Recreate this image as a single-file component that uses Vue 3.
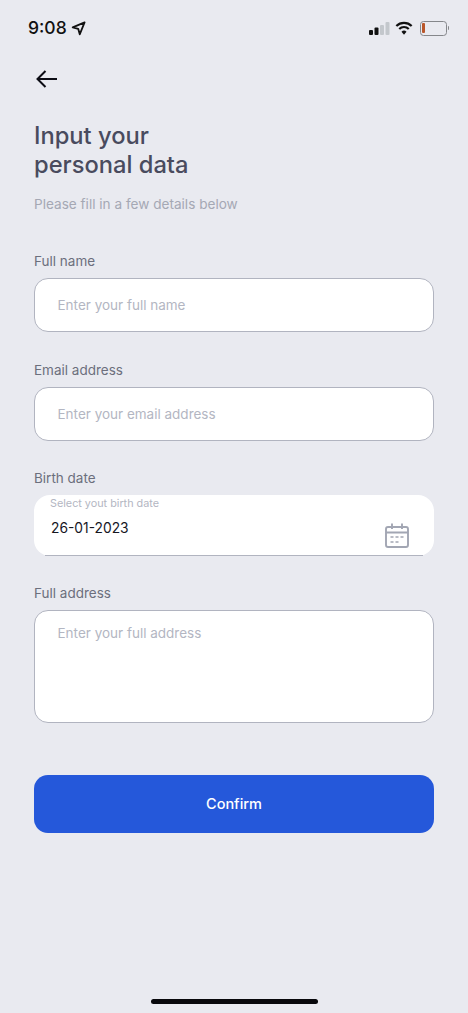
<script setup>
const fields = [
  { label: 'Full name', placeholder: 'Enter your full name' },
  { label: 'Email address', placeholder: 'Enter your email address' }
]
</script>

<template>
  <div class="screen">
    <header class="status">
      <div class="time">
        <span>9:08</span>
        <svg class="loc" viewBox="0 0 16 16" width="15" height="15"><path d="M14.5 1.5 1.8 6.8l5.9 1.5 1.6 5.9z" fill="none" stroke="#111" stroke-width="1.9" stroke-linejoin="round"/></svg>
      </div>
      <div class="sys">
        <svg class="signal" width="21" height="13" viewBox="0 0 21 13">
          <rect x="0" y="8" width="4" height="5" rx="1" fill="#111"/>
          <rect x="5.5" y="5.5" width="4" height="7.5" rx="1" fill="#111"/>
          <rect x="11" y="3" width="4" height="10" rx="1" fill="#c3c7cc"/>
          <rect x="16.5" y="0" width="4" height="13" rx="1" fill="#c3c7cc"/>
        </svg>
        <svg class="wifi" width="18" height="14" viewBox="0 0 19 15">
          <path d="M1.3 5.4a11.6 11.6 0 0 1 16.4 0" fill="none" stroke="#111" stroke-width="2.3"/>
          <path d="M4.4 8.6a7.2 7.2 0 0 1 10.2 0" fill="none" stroke="#111" stroke-width="2.3"/>
          <path d="M9.5 14.6 6.8 11.5a3.9 3.9 0 0 1 5.4 0z" fill="#111"/>
        </svg>
        <div class="battery"><div class="cell"><i></i></div><b></b></div>
      </div>
    </header>

    <main class="content">
      <button class="back" aria-label="Back">
        <svg width="24" height="20" viewBox="0 0 24 20"><path d="M22 10H3M10.5 2 2.5 10l8 8" fill="none" stroke="#0c0c14" stroke-width="2"/></svg>
      </button>

      <h1>Input your<br>personal data</h1>
      <p class="sub">Please fill in a few details below</p>

      <div v-for="f in fields" :key="f.label" class="field">
        <label>{{ f.label }}</label>
        <div class="input">{{ f.placeholder }}</div>
      </div>

      <div class="field date-field">
        <label>Birth date</label>
        <div class="date">
          <span class="hint">Select yout birth date</span>
          <span class="value">26-01-2023</span>
          <svg class="cal" width="26" height="26" viewBox="0 0 26 26" fill="none" stroke="#a2a6b3" stroke-width="1.9">
            <rect x="2" y="5" width="22" height="20" rx="2"/>
            <path d="M2 10.5h22M8 1.5V7M18 1.5V7"/>
            <path d="M6.5 15h3M11.5 15h3M16.5 15h3M6.5 20h3M11.5 20h3" stroke-width="1.5"/>
          </svg>
          <div class="underline"></div>
        </div>
      </div>

      <div class="field addr">
        <label>Full address</label>
        <div class="input area">Enter your full address</div>
      </div>

      <button class="confirm">Confirm</button>
    </main>

    <div class="home"></div>
  </div>
</template>

<style>
html, body { margin: 0; background: #e9eaf0; }
</style>

<style scoped>
.screen {
  width: 468px;
  height: 1013px;
  background: #e9eaf0;
  position: relative;
  overflow: hidden;
  font-family: Inter, "Liberation Sans", sans-serif;
  display: flex;
  flex-direction: column;
}
.status {
  height: 56px;
  box-sizing: border-box;
  padding: 17px 19px 0 28px;
  display: flex;
  justify-content: space-between;
  align-items: flex-start;
}
.time {
  display: flex;
  align-items: center;
  gap: 4px;
  font-size: 17.5px;
  font-weight: 500;
  line-height: 22px;
  color: #111;
}
.loc { margin-top: 1px; }
.sys {
  display: flex;
  align-items: center;
  gap: 5px;
  height: 22px;
}
.wifi { margin-right: 1.5px; }
.battery { display: flex; align-items: center; gap: 1px; }
.cell {
  width: 22px;
  height: 10px;
  border: 1px solid #85878b;
  border-radius: 3.5px;
  padding: 1.5px;
  box-sizing: content-box;
  display: flex;
}
.cell i { width: 3px; background: #b9562a; border-radius: 1px; }
.battery b { width: 1.5px; height: 4px; background: #85878b; border-radius: 0 1px 1px 0; }
.content {
  padding: 0 34px;
  display: flex;
  flex-direction: column;
}
.back {
  width: 24px;
  height: 20px;
  padding: 0;
  margin: 13px 0 0 1px;
  border: 0;
  background: none;
  display: block;
}
h1 {
  margin: 32px 0 0;
  font-size: 23.7px;
  line-height: 29px;
  font-weight: 500;
  color: #494b5e;
}
.sub {
  margin: 16px 0 0;
  font-size: 13.6px;
  line-height: 18px;
  color: #a5a8b4;
}
.field { display: flex; flex-direction: column; }
.field label {
  font-size: 13.5px;
  line-height: 18px;
  color: #6c6f7d;
  margin-bottom: 8px;
}
.sub + .field { margin-top: 39px; }
.field + .field { margin-top: 28.6px; }
.input {
  height: 54px;
  box-sizing: border-box;
  background: #fff;
  border: 1px solid #b1b4c0;
  border-radius: 14px;
  padding: 0 22.5px;
  display: flex;
  align-items: center;
  font-size: 13.5px;
  color: #b3b6c2;
}
.date {
  position: relative;
  height: 61px;
  background: #fff;
  border-radius: 16px;
  padding: 0 16px;
  display: flex;
  flex-direction: column;
}
.hint { font-size: 10.8px; line-height: 13px; color: #b3b6c2; margin-top: 2px; }
.value { font-size: 13.8px; line-height: 18px; color: #16161f; margin: 9px 0 0 1px; }
.cal { position: absolute; right: 24px; top: 27px; }
.underline {
  position: absolute;
  left: 11px;
  right: 11px;
  bottom: 0;
  height: 1px;
  background: #b1b4c0;
}
.field.addr { margin-top: 28px; }
.area {
  height: 113px;
  align-items: flex-start;
  padding-top: 14px;
}
.confirm {
  margin-top: 51.6px;
  height: 58px;
  border: 0;
  border-radius: 14px;
  background: #2558da;
  color: #fff;
  font: 500 14.5px Inter, "Liberation Sans", sans-serif;
}
.home {
  position: absolute;
  left: 151px;
  bottom: 9px;
  width: 167px;
  height: 5px;
  border-radius: 3px;
  background: #08080c;
}
</style>
